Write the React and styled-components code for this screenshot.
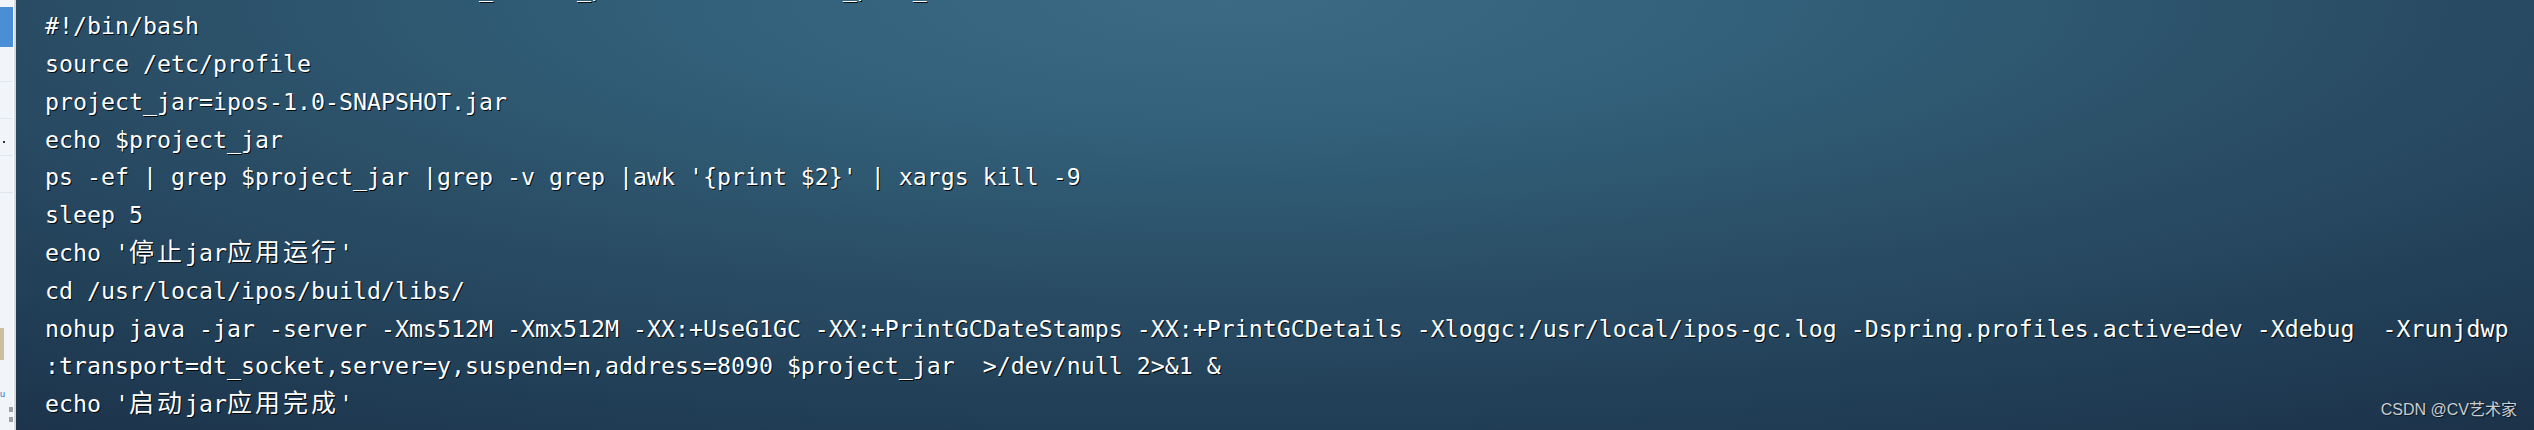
import React from "react";
import styled, { createGlobalStyle } from "styled-components";

const GlobalStyle = createGlobalStyle`
  html, body {
    margin: 0;
    padding: 0;
    background: #1d3449;
  }
  #root {
    width: 2534px;
    height: 430px;
  }
`;

// first line is scrolled mostly out of view, only its descenders show
const lines = [
  "echo restart ./libs/start.sh &&_load,e_profile.sh 2>&1,ls_path_a,",
  "#!/bin/bash",
  "source /etc/profile",
  "project_jar=ipos-1.0-SNAPSHOT.jar",
  "echo $project_jar",
  "ps -ef | grep $project_jar |grep -v grep |awk '{print $2}' | xargs kill -9",
  "sleep 5",
  "echo '停止jar应用运行'",
  "cd /usr/local/ipos/build/libs/",
  "nohup java -jar -server -Xms512M -Xmx512M -XX:+UseG1GC -XX:+PrintGCDateStamps -XX:+PrintGCDetails -Xloggc:/usr/local/ipos-gc.log -Dspring.profiles.active=dev -Xdebug  -Xrunjdwp",
  ":transport=dt_socket,server=y,suspend=n,address=8090 $project_jar  >/dev/null 2>&1 &",
  "echo '启动jar应用完成'",
];

const App = () => {
  const renderLine = (text) =>
    text.split(/([\u3000-\u9fff]+)/).map((part, i) =>
      /[\u3000-\u9fff]/.test(part) ? (
        <Wide key={i}>{part}</Wide>
      ) : (
        part
      )
    );

  return (
    <>
      <GlobalStyle />
      <Window>
        <Sidebar>
          <ActiveTab />
          <TreeRow />
          <TreeRow />
          <TreeRow $dot />
          <TreeRow />
          <Spacer />
          <FolderMark />
          <LinkMark>u</LinkMark>
          <Squares>
            <span />
            <span />
          </Squares>
        </Sidebar>
        <Divider />
        <Terminal>
          {lines.map((line, i) => (
            <Line key={i}>{renderLine(line)}</Line>
          ))}
          <Watermark>CSDN @CV艺术家</Watermark>
        </Terminal>
      </Window>
    </>
  );
};

const Window = styled.div`
  display: flex;
  width: 2534px;
  height: 430px;
  overflow: hidden;
`;

const Sidebar = styled.div`
  width: 13px;
  flex-shrink: 0;
  display: flex;
  flex-direction: column;
  background: #f1f5f9;
  padding-top: 7px;
  box-sizing: border-box;
`;

const ActiveTab = styled.div`
  height: 40px;
  background: #4a8fd5;
  margin-bottom: 10px;
`;

const TreeRow = styled.div`
  height: 24px;
  margin-bottom: 12px;
  border-bottom: 1px solid #dfe6ee;
  &::after {
    content: "";
    display: ${(p) => (p.$dot ? "block" : "none")};
    width: 2px;
    height: 2px;
    background: #333;
    margin: 10px 0 0 3px;
  }
`;

const Spacer = styled.div`
  flex: 1;
`;

const FolderMark = styled.div`
  width: 4px;
  height: 32px;
  background: #cdbf9e;
  margin-bottom: 30px;
`;

const LinkMark = styled.div`
  font-family: "Liberation Sans", sans-serif;
  font-size: 9px;
  line-height: 9px;
  color: #2f6fc0;
  margin-bottom: 8px;
`;

const Squares = styled.div`
  display: flex;
  flex-direction: column;
  align-items: flex-end;
  gap: 5px;
  padding-bottom: 8px;
  span {
    width: 4px;
    height: 5px;
    background: #9aa0a6;
  }
`;

const Divider = styled.div`
  width: 3px;
  flex-shrink: 0;
  background: #d6d9dc;
  border-left: 1px solid #ffffff;
  box-sizing: border-box;
`;

const Terminal = styled.div`
  flex: 1;
  position: relative;
  display: flex;
  flex-direction: column;
  justify-content: flex-end;
  overflow: hidden;
  padding: 0 0 7px 29px;
  box-sizing: border-box;
  background: radial-gradient(
    ellipse 90% 130% at 48% 0%,
    #3c6a84 0%,
    #33617b 22%,
    #2a4e66 50%,
    #213f57 75%,
    #1b3047 100%
  );
`;

const Line = styled.div`
  flex-shrink: 0;
  white-space: pre;
  font-family: "DejaVu Sans Mono", monospace;
  font-size: 23.25px;
  line-height: 37.8px;
  color: #ffffff;
  text-shadow: 1px 1px 0 rgba(0, 0, 0, 0.9);
`;

const Wide = styled.span`
  font-family: "Noto Sans CJK SC", sans-serif;
  font-size: 25px;
  line-height: 1;
  letter-spacing: 3px;
`;

const Watermark = styled.div`
  position: absolute;
  right: 17px;
  bottom: 10px;
  font-family: "Liberation Sans", "Noto Sans CJK SC", sans-serif;
  font-size: 16px;
  color: #c9ced3;
  text-shadow: 1px 1px 1px rgba(0, 0, 0, 0.6);
`;

export default App;
